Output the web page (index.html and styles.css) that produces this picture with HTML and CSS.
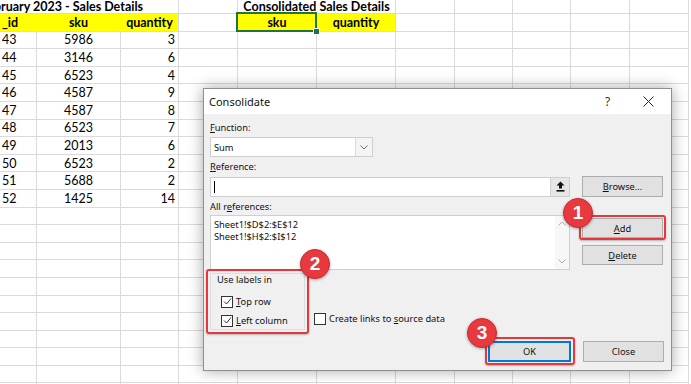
FILE: index.html
```html
<!DOCTYPE html>
<html>
<head>
<meta charset="utf-8">
<link rel="stylesheet" href="styles.css">
</head>
<body>
<div class="sheet">
  <div class="row row-title">
    <span class="c title-left span3"><b class="nowrap">February 2023 - Sales Details</b></span>
    <span class="c"></span>
    <span class="c title-mid span2"><b class="nowrap">Consolidated Sales Details</b></span>
    <span class="c"></span><span class="c"></span><span class="c"></span><span class="c"></span><span class="c"></span>
  </div>
  <div class="row">
    <span class="c y yin lt b">_id</span>
    <span class="c y yin ctr b">sku</span>
    <span class="c y ctr b">quantity</span>
    <span class="c"></span>
    <span class="c y yin ctr b sel">sku</span>
    <span class="c y ctr b">quantity</span>
    <span class="c"></span><span class="c"></span><span class="c"></span><span class="c"></span><span class="c"></span>
  </div>
  <div class="row"><span class="c lt">43</span><span class="c ctr">5986</span><span class="c rt">3</span><span class="c"></span><span class="c"></span><span class="c"></span><span class="c"></span><span class="c"></span><span class="c"></span><span class="c"></span><span class="c"></span></div>
  <div class="row"><span class="c lt">44</span><span class="c ctr">3146</span><span class="c rt">6</span><span class="c"></span><span class="c"></span><span class="c"></span><span class="c"></span><span class="c"></span><span class="c"></span><span class="c"></span><span class="c"></span></div>
  <div class="row"><span class="c lt">45</span><span class="c ctr">6523</span><span class="c rt">4</span><span class="c"></span><span class="c"></span><span class="c"></span><span class="c"></span><span class="c"></span><span class="c"></span><span class="c"></span><span class="c"></span></div>
  <div class="row"><span class="c lt">46</span><span class="c ctr">4587</span><span class="c rt">9</span><span class="c"></span><span class="c"></span><span class="c"></span><span class="c"></span><span class="c"></span><span class="c"></span><span class="c"></span><span class="c"></span></div>
  <div class="row"><span class="c lt">47</span><span class="c ctr">4587</span><span class="c rt">8</span><span class="c"></span><span class="c"></span><span class="c"></span><span class="c"></span><span class="c"></span><span class="c"></span><span class="c"></span><span class="c"></span></div>
  <div class="row"><span class="c lt">48</span><span class="c ctr">6523</span><span class="c rt">7</span><span class="c"></span><span class="c"></span><span class="c"></span><span class="c"></span><span class="c"></span><span class="c"></span><span class="c"></span><span class="c"></span></div>
  <div class="row"><span class="c lt">49</span><span class="c ctr">2013</span><span class="c rt">6</span><span class="c"></span><span class="c"></span><span class="c"></span><span class="c"></span><span class="c"></span><span class="c"></span><span class="c"></span><span class="c"></span></div>
  <div class="row"><span class="c lt">50</span><span class="c ctr">6523</span><span class="c rt">2</span><span class="c"></span><span class="c"></span><span class="c"></span><span class="c"></span><span class="c"></span><span class="c"></span><span class="c"></span><span class="c"></span></div>
  <div class="row"><span class="c lt">51</span><span class="c ctr">5688</span><span class="c rt">2</span><span class="c"></span><span class="c"></span><span class="c"></span><span class="c"></span><span class="c"></span><span class="c"></span><span class="c"></span><span class="c"></span></div>
  <div class="row"><span class="c lt">52</span><span class="c ctr">1425</span><span class="c rt">14</span><span class="c"></span><span class="c"></span><span class="c"></span><span class="c"></span><span class="c"></span><span class="c"></span><span class="c"></span><span class="c"></span></div>
  <div class="row"><span class="c"></span><span class="c"></span><span class="c"></span><span class="c"></span><span class="c"></span><span class="c"></span><span class="c"></span><span class="c"></span><span class="c"></span><span class="c"></span><span class="c"></span></div>
  <div class="row"><span class="c"></span><span class="c"></span><span class="c"></span><span class="c"></span><span class="c"></span><span class="c"></span><span class="c"></span><span class="c"></span><span class="c"></span><span class="c"></span><span class="c"></span></div>
  <div class="row"><span class="c"></span><span class="c"></span><span class="c"></span><span class="c"></span><span class="c"></span><span class="c"></span><span class="c"></span><span class="c"></span><span class="c"></span><span class="c"></span><span class="c"></span></div>
  <div class="row"><span class="c"></span><span class="c"></span><span class="c"></span><span class="c"></span><span class="c"></span><span class="c"></span><span class="c"></span><span class="c"></span><span class="c"></span><span class="c"></span><span class="c"></span></div>
  <div class="row"><span class="c"></span><span class="c"></span><span class="c"></span><span class="c"></span><span class="c"></span><span class="c"></span><span class="c"></span><span class="c"></span><span class="c"></span><span class="c"></span><span class="c"></span></div>
  <div class="row"><span class="c"></span><span class="c"></span><span class="c"></span><span class="c"></span><span class="c"></span><span class="c"></span><span class="c"></span><span class="c"></span><span class="c"></span><span class="c"></span><span class="c"></span></div>
  <div class="row"><span class="c"></span><span class="c"></span><span class="c"></span><span class="c"></span><span class="c"></span><span class="c"></span><span class="c"></span><span class="c"></span><span class="c"></span><span class="c"></span><span class="c"></span></div>
  <div class="row"><span class="c"></span><span class="c"></span><span class="c"></span><span class="c"></span><span class="c"></span><span class="c"></span><span class="c"></span><span class="c"></span><span class="c"></span><span class="c"></span><span class="c"></span></div>
  <div class="row"><span class="c"></span><span class="c"></span><span class="c"></span><span class="c"></span><span class="c"></span><span class="c"></span><span class="c"></span><span class="c"></span><span class="c"></span><span class="c"></span><span class="c"></span></div>
  <div class="row"><span class="c"></span><span class="c"></span><span class="c"></span><span class="c"></span><span class="c"></span><span class="c"></span><span class="c"></span><span class="c"></span><span class="c"></span><span class="c"></span><span class="c"></span></div>
  <div class="row"><span class="c"></span><span class="c"></span><span class="c"></span><span class="c"></span><span class="c"></span><span class="c"></span><span class="c"></span><span class="c"></span><span class="c"></span><span class="c"></span><span class="c"></span></div>
</div>

<div class="dlg">
  <div class="titlebar">
    <span class="dlg-title">Consolidate</span>
    <span class="tbtn">?</span>
    <span class="tbtn">
      <svg width="11" height="11" viewBox="0 0 11 11"><path d="M0.5 0.5 L10.5 10.5 M10.5 0.5 L0.5 10.5" stroke="#222" stroke-width="1" fill="none"/></svg>
    </span>
  </div>
  <div class="dlg-body">
    <div class="lbl f-lbl"><u>F</u>unction:</div>
    <div class="select">
      <span class="select-val">Sum</span>
      <span class="select-btn">
        <svg width="8" height="5" viewBox="0 0 8 5"><path d="M0.5 0.5 L4 4 L7.5 0.5" stroke="#707070" stroke-width="1" fill="none"/></svg>
      </span>
    </div>
    <div class="lbl r-lbl"><u>R</u>eference:</div>
    <div class="ref-row">
      <div class="input">
        <span class="caret"></span>
        <span class="collapse">
          <svg width="9" height="11" viewBox="0 0 9 11"><path d="M4.5 0.5 L8.5 4.5 L6 4.5 L6 7.5 L3 7.5 L3 4.5 L0.5 4.5 Z" fill="#111"/><rect x="0.5" y="9" width="8" height="1.6" fill="#111"/></svg>
        </span>
      </div>
      <div class="btn"><u>B</u>rowse...</div>
    </div>
    <div class="lbl a-lbl">All r<u>e</u>ferences:</div>
    <div class="list-row">
      <div class="list">
        <div class="list-items">
          <div>Sheet1!$D$2:$E$12</div>
          <div>Sheet1!$H$2:$I$12</div>
        </div>
        <div class="scroll">
          <svg width="8" height="5" viewBox="0 0 8 5"><path d="M0.5 4.5 L4 1 L7.5 4.5" stroke="#b0b0b0" stroke-width="1" fill="none"/></svg>
          <svg width="8" height="5" viewBox="0 0 8 5"><path d="M0.5 0.5 L4 4 L7.5 0.5" stroke="#b0b0b0" stroke-width="1" fill="none"/></svg>
        </div>
      </div>
      <div class="side">
        <div class="btn btn-add hl"><u>A</u>dd<span class="badge badge-1">1</span></div>
        <div class="btn btn-del"><u>D</u>elete</div>
      </div>
    </div>
    <div class="opt-row">
      <div class="group hl">
        <div class="group-lbl">Use labels in</div>
        <div class="chk chk-first"><span class="box"><svg width="11" height="11" viewBox="0 0 11 11"><path d="M2 5.5 L4.5 8 L9 2.5" stroke="#333" stroke-width="1" fill="none"/></svg></span><span><u>T</u>op row</span></div>
        <div class="chk"><span class="box"><svg width="11" height="11" viewBox="0 0 11 11"><path d="M2 5.5 L4.5 8 L9 2.5" stroke="#333" stroke-width="1" fill="none"/></svg></span><span><u>L</u>eft column</span></div>
        <span class="badge badge-2">2</span>
      </div>
      <div class="chk chk-links"><span class="box"></span><span>Create links to <u>s</u>ource data</span></div>
    </div>
    <div class="btn-row">
      <div class="btn btn-ok hl">OK<span class="badge badge-3">3</span></div>
      <div class="btn">Close</div>
    </div>
  </div>
</div>
</body>
</html>
```

FILE: styles.css
```css
html, body {
  margin: 0;
  padding: 0;
}
body {
  width: 691px;
  height: 384px;
  overflow: hidden;
  position: relative;
  background: #fff;
  font-family: Lato, "Liberation Sans", sans-serif;
  color: #000;
}

/* ---------- spreadsheet ---------- */
.sheet {
  font-size: 12.5px;
}
.row {
  display: grid;
  grid-template-columns: 37px 84px 58px 59px 79px 79px 58.5px 58.5px 58px 59px 59px;
  height: 17.6px;
}
.row-title {
  height: 14px;
}
.c {
  box-sizing: border-box;
  border-right: 1px solid #dadada;
  border-bottom: 1px solid #dadada;
  display: flex;
  align-items: center;
  white-space: nowrap;
  overflow: visible;
  min-width: 0;
}
.row-title .c {
  align-items: flex-start;
}
.span3 { grid-column: span 3; }
.span2 { grid-column: span 2; }
.nowrap { white-space: nowrap; font-weight: 700; line-height: 13px; }
.title-left {
  justify-content: flex-end;
  padding-right: 35px;
  overflow: hidden;
}
.title-mid { justify-content: center; }
.y { background: #ffff00; }
.yin { border-right-color: #ffff00; }
.b { font-weight: 700; }
.lt { padding-left: 2px; }
.ctr { justify-content: center; }
.rt { justify-content: flex-end; padding-right: 3px; }
.sel { position: relative; }
.sel::before {
  content: "";
  position: absolute;
  left: -2px; top: -2px; right: -1px; bottom: -1px;
  border: 2px solid #217346;
}
.sel::after {
  content: "";
  position: absolute;
  right: -4px; bottom: -4px;
  width: 5px; height: 5px;
  background: #217346;
  border: 1px solid #fff;
}

/* ---------- dialog ---------- */
.dlg {
  position: absolute;
  left: 203px;
  top: 88px;
  width: 469px;
  height: 283px;
  box-sizing: border-box;
  border: 1px solid #8f8f8f;
  background: #f0f0f0;
  box-shadow: 0 0 14px rgba(0, 0, 0, 0.35);
  display: flex;
  flex-direction: column;
  font-family: "Noto Sans", "Open Sans", sans-serif;
  font-size: 9.3px;
  color: #111;
}
.titlebar {
  height: 25px;
  background: #fff;
  display: flex;
  align-items: center;
  padding-left: 5px;
  padding-right: 2px;
}
.dlg-title {
  flex: 1;
  font-size: 11px;
  color: #111;
}
.tbtn {
  width: 41px;
  display: flex;
  justify-content: center;
  align-items: center;
  font-size: 12px;
  color: #333;
}
.dlg-body {
  flex: 1;
  padding-left: 6px;
  display: flex;
  flex-direction: column;
}
.lbl { line-height: 14px; height: 14px; }
.f-lbl { margin-top: 7px; }
.r-lbl { margin-top: 3px; }
.a-lbl { margin-top: 3px; }

.select {
  margin-top: 2px;
  width: 163px;
  height: 20px;
  box-sizing: border-box;
  border: 1px solid #cfcfcf;
  background: #fff;
  display: flex;
}
.select-val {
  flex: 1;
  padding-left: 3px;
  display: flex;
  align-items: center;
}
.select-btn {
  width: 16px;
  border-left: 1px solid #dcdcdc;
  background: #f4f4f4;
  display: flex;
  align-items: center;
  justify-content: center;
}

.ref-row {
  margin-top: 2px;
  display: flex;
  align-items: center;
  gap: 12px;
  height: 21px;
}
.input {
  width: 360px;
  height: 20px;
  box-sizing: border-box;
  border: 1px solid #cfcfcf;
  background: #fff;
  display: flex;
  align-items: center;
}
.caret {
  width: 1px;
  height: 12px;
  background: #000;
  margin-left: 3px;
}
.input .collapse {
  margin-left: auto;
  width: 18px;
  height: 18px;
  background: #e6e6e6;
  border-left: 1px solid #d0d0d0;
  display: flex;
  align-items: center;
  justify-content: center;
}

.btn {
  width: 81px;
  height: 21px;
  box-sizing: border-box;
  background: #e1e1e1;
  border: 1px solid #adadad;
  display: flex;
  align-items: center;
  justify-content: center;
  position: relative;
}

.list-row {
  margin-top: 1px;
  display: flex;
  gap: 12px;
}
.list {
  width: 360px;
  height: 55px;
  box-sizing: border-box;
  border: 1px solid #cfcfcf;
  background: #fff;
  display: flex;
}
.list-items {
  flex: 1;
  padding: 3px 0 0 3px;
  line-height: 12px;
  font-size: 9.3px;
}
.scroll {
  width: 14px;
  background: #f7f7f7;
  display: flex;
  flex-direction: column;
  justify-content: space-between;
  align-items: center;
  padding: 5px 0 5px;
}
.side {
  display: flex;
  flex-direction: column;
}
.btn-add { margin-top: 3px; height: 20px; }
.btn-del { margin-top: 7px; height: 20px; }

.opt-row {
  margin-top: 3px;
  display: flex;
  align-items: flex-end;
  gap: 9px;
}
.group {
  width: 95px;
  height: 57px;
  box-sizing: border-box;
  border: 1px solid #dcdcdc;
  padding-left: 6px;
  position: relative;
}
.group-lbl {
  line-height: 12px;
}
.chk {
  display: flex;
  align-items: center;
  gap: 3px;
  height: 13px;
}
.group .chk { margin-left: 4px; margin-top: 6px; }
.group .chk-first { margin-top: 9px; }
.box {
  width: 12px;
  height: 12px;
  box-sizing: border-box;
  border: 1px solid #333;
  background: #fff;
  display: flex;
}
.box svg { margin: -0.5px; }
.chk-links { margin-bottom: 5px; }

.btn-row {
  margin-top: 11px;
  display: flex;
  justify-content: flex-end;
  gap: 12px;
  padding-right: 7px;
}
.btn-ok {
  width: 83px;
  border: 1px solid #0078d7;
  box-shadow: inset 0 0 0 1px #0078d7;
}

/* ---------- annotations ---------- */
.hl::before {
  content: "";
  position: absolute;
  left: -4px; top: -4px; right: -4px; bottom: -4px;
  border: 2px solid #e8363d;
  border-radius: 3px;
  box-shadow: 0 1px 2px rgba(0, 0, 0, 0.25);
  pointer-events: none;
}
.btn-add.hl::before { left: -4px; top: -4px; right: -4px; bottom: -3px; }
.btn-ok.hl::before { left: -4px; top: -5px; right: -5px; bottom: -4px; }
.group.hl::before { left: -5px; top: -5px; right: -5px; bottom: -5px; }

.badge {
  position: absolute;
  width: 30px;
  height: 30px;
  box-sizing: border-box;
  border-radius: 50%;
  background: #e8393e;
  border: 1px solid #c92a30;
  box-shadow: 0 1px 3px rgba(0, 0, 0, 0.35);
  color: #fff;
  font-family: "Liberation Sans", Arial, sans-serif;
  font-weight: 700;
  font-size: 19px;
  display: flex;
  align-items: center;
  justify-content: center;
  z-index: 5;
}
.badge-1 { left: -20px; top: -21px; }
.badge-2 { left: 89px; top: -25px; }
.badge-3 { left: -22px; top: -24px; }
```
